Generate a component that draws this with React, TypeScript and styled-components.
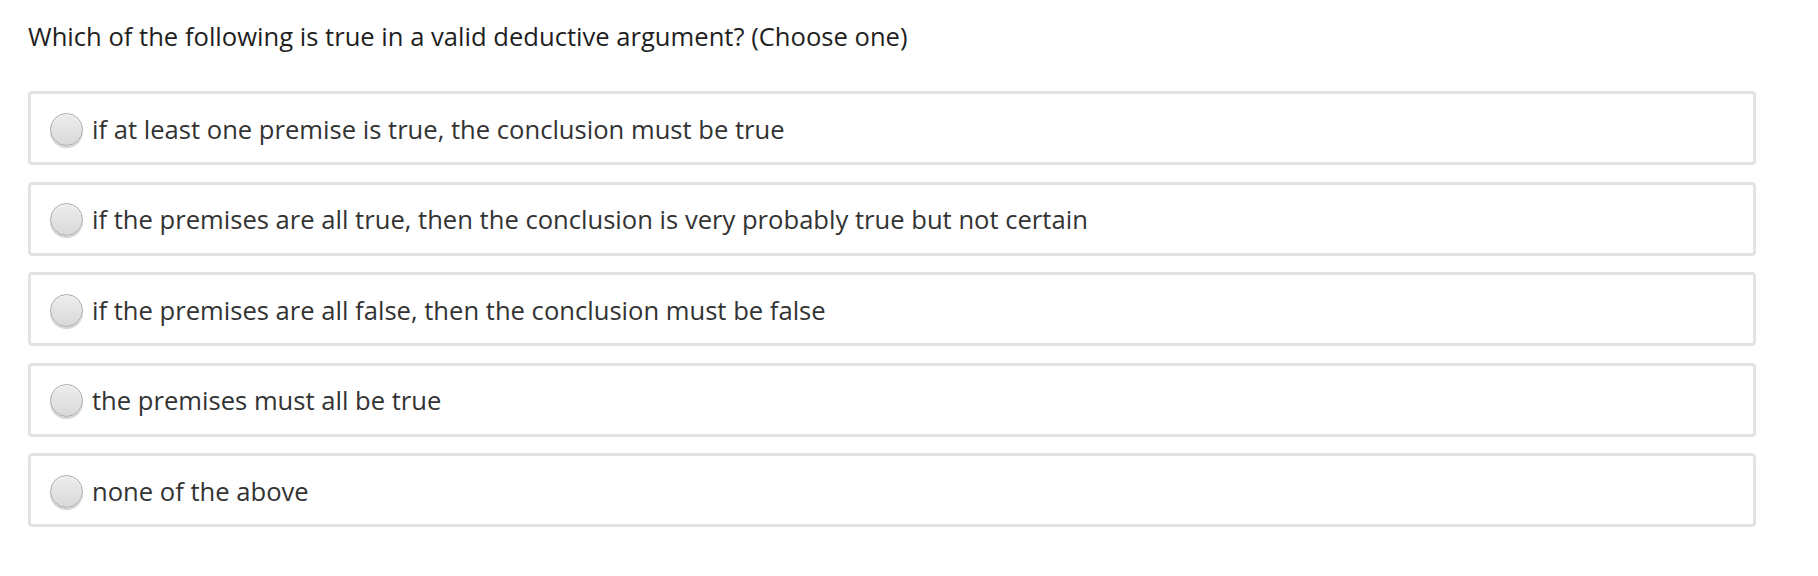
import React from "react"
import styled, { createGlobalStyle } from "styled-components"

const GlobalStyle = createGlobalStyle`
  html, body {
    margin: 0;
    padding: 0;
    background: #ffffff;
  }
  body {
    font-family: "Open Sans", "Noto Sans", sans-serif;
  }
`

const Page = styled.div`
  padding: 19px 62px 0 28px;
`

const Question = styled.div`
  font-size: 25.6px;
  line-height: 35px;
  color: #1f1f1f;
  margin-bottom: 37px;
`

const Choices = styled.div`
  display: flex;
  flex-direction: column;
  gap: 16.5px;
`

const Choice = styled.label`
  display: flex;
  align-items: center;
  height: 74px;
  box-sizing: border-box;
  border: 3px solid #e3e3e3;
  border-radius: 4px;
  padding: 2px 0 0 19px;
  cursor: pointer;
`

const Radio = styled.span`
  flex: none;
  width: 33px;
  height: 33px;
  box-sizing: border-box;
  border-radius: 50%;
  border: 1px solid #a9a9a9;
  background: linear-gradient(#ededed, #d9d9d9);
  box-shadow: 0 2px 1px rgba(0, 0, 0, 0.18), inset 0 1px 0 #fafafa;
  margin-right: 9px;
`

const ChoiceText = styled.span`
  font-size: 25.6px;
  line-height: 35px;
  color: #333333;
`

const choices = [
  "if at least one premise is true, the conclusion must be true",
  "if the premises are all true, then the conclusion is very probably true but not certain",
  "if the premises are all false, then the conclusion must be false",
  "the premises must all be true",
  "none of the above",
]

export default function App() {
  return (
    <>
      <GlobalStyle />
      <Page>
        <Question>Which of the following is true in a valid deductive argument? (Choose one)</Question>
        <Choices>
          {choices.map(text => (
            <Choice key={text}>
              <Radio />
              <ChoiceText>{text}</ChoiceText>
            </Choice>
          ))}
        </Choices>
      </Page>
    </>
  )
}
